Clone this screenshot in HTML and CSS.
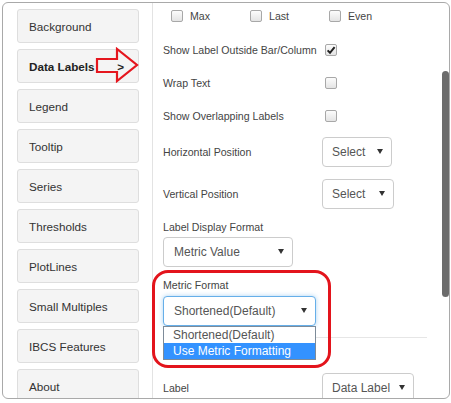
FILE: index.html
```html
<!DOCTYPE html>
<html>
<head>
<meta charset="utf-8">
<link rel="stylesheet" href="styles.css">
</head>
<body>
<div class="panel">
  <div class="nav">
    <div class="nav-list">
      <div class="nav-btn nav-prev"></div>
      <div class="nav-btn">Background</div>
      <div class="nav-btn active">
        <span>Data Labels</span><span class="chev">&gt;</span>
        <svg class="pointer" width="44" height="36" viewBox="0 0 44 36">
          <polygon points="2,12 22,12 22,2 42,18 22,34 22,25 2,25" fill="none" stroke="#e5161e" stroke-width="2.2" stroke-linejoin="miter"/>
        </svg>
      </div>
      <div class="nav-btn">Legend</div>
      <div class="nav-btn">Tooltip</div>
      <div class="nav-btn">Series</div>
      <div class="nav-btn">Thresholds</div>
      <div class="nav-btn">PlotLines</div>
      <div class="nav-btn">Small Multiples</div>
      <div class="nav-btn">IBCS Features</div>
      <div class="nav-btn">About</div>
    </div>
  </div>
  <div class="content">
    <div class="form">
      <div class="row-checks">
        <label class="check-item"><span class="cb"></span><span>Max</span></label>
        <label class="check-item"><span class="cb"></span><span>Last</span></label>
        <label class="check-item"><span class="cb"></span><span>Even</span></label>
      </div>
      <div class="row row-cb first-cb">
        <span class="lbl">Show Label Outside Bar/Column</span>
        <span class="cb cb-right checked"><svg width="10" height="10" viewBox="0 0 10 10"><path d="M1.6 5.4 L4 7.8 L8.6 2.2" fill="none" stroke="#222" stroke-width="2"/></svg></span>
      </div>
      <div class="row row-cb">
        <span class="lbl">Wrap Text</span>
        <span class="cb cb-right"></span>
      </div>
      <div class="row row-cb">
        <span class="lbl">Show Overlapping Labels</span>
        <span class="cb cb-right"></span>
      </div>
      <div class="row row-sel horiz">
        <span class="lbl">Horizontal Position</span>
        <div class="select w70"><span>Select</span><span class="caret"></span></div>
      </div>
      <div class="row row-sel vert">
        <span class="lbl">Vertical Position</span>
        <div class="select w72"><span>Select</span><span class="caret"></span></div>
      </div>
      <div class="field-label fmt-label">Label Display Format</div>
      <div class="select w130 stacked"><span>Metric Value</span><span class="caret"></span></div>
      <div class="field-label metric-label">Metric Format</div>
      <div class="select-wrap">
        <div class="select w153 focused stacked"><span>Shortened(Default)</span><span class="caret"></span></div>
        <div class="dropdown">
          <div class="opt">Shortened(Default)</div>
          <div class="opt selected">Use Metric Formatting</div>
        </div>
      </div>
      <div class="divider"></div>
      <div class="row row-sel label-row">
        <span class="lbl">Label</span>
        <div class="select w92"><span>Data Label</span><span class="caret"></span></div>
      </div>
    </div>
    <div class="scrolltrack"><div class="thumb"></div></div>
  </div>
  <div class="callout"></div>
</div>
</body>
</html>
```
FILE: styles.css
```css
html, body {
  margin: 0;
  padding: 0;
  background: #ffffff;
}
body {
  font-family: "Liberation Sans", Arial, sans-serif;
  color: #333;
}
.panel {
  position: relative;
  box-sizing: border-box;
  margin: 2px 0 0 2px;
  width: 448px;
  height: 397px;
  border: 1px solid #a9a9a9;
  border-radius: 6px;
  overflow: hidden;
  display: flex;
  background: #fff;
}
.nav {
  box-sizing: border-box;
  width: 150px;
  flex: none;
  border-right: 1px solid #e3e3e3;
  overflow: hidden;
}
.nav-list {
  display: flex;
  flex-direction: column;
  gap: 6px;
  padding-left: 14px;
}
.nav-btn {
  position: relative;
  box-sizing: border-box;
  width: 122px;
  height: 34px;
  flex: none;
  border: 1px solid #dedede;
  border-radius: 3px;
  background: #f4f4f4;
  padding: 0 14px 0 11px;
  display: flex;
  align-items: center;
  justify-content: space-between;
  font-size: 11.7px;
  color: #333;
}
.nav-prev {
  margin-top: -34px;
}
.nav-btn.active {
  font-weight: bold;
  color: #222;
}
.chev {
  font-weight: bold;
}
.pointer {
  position: absolute;
  left: 77px;
  top: -3px;
}
.content {
  flex: 1;
  display: flex;
  min-width: 0;
}
.form {
  flex: 1;
  padding-left: 10px;
  font-size: 10.6px;
  color: #444;
}
.row-checks {
  display: flex;
  height: 25px;
  align-items: center;
  padding-left: 8px;
}
.check-item {
  width: 79px;
  display: flex;
  align-items: center;
  gap: 7px;
}
.cb {
  box-sizing: border-box;
  width: 12px;
  height: 12px;
  flex: none;
  border: 1px solid #a8a8a8;
  border-radius: 2px;
  background: linear-gradient(#fcfcfc, #e4e4e4);
  display: flex;
  align-items: center;
  justify-content: center;
}
.row {
  display: flex;
  align-items: center;
}
.lbl {
  width: 159px;
  flex: none;
}
.row-cb {
  height: 33px;
}
.first-cb {
  margin-top: 5px;
}
.cb-right {
  margin-left: 3px;
}
.row-sel {
  height: 30px;
}
.horiz {
  margin-top: 5px;
}
.vert {
  margin-top: 12px;
}
.select {
  box-sizing: border-box;
  height: 30px;
  border: 1px solid #cccccc;
  border-radius: 4px;
  background: #fff;
  display: flex;
  align-items: center;
  justify-content: space-between;
  padding: 0 8px 0 9px;
  font-size: 12px;
  color: #555;
}
.select.stacked {
  padding-left: 10px;
}
.caret {
  width: 0;
  height: 0;
  border-left: 3px solid transparent;
  border-right: 3px solid transparent;
  border-top: 5px solid #333;
  margin-top: -1px;
}
.w70 { width: 70px; }
.w72 { width: 72px; }
.w92 { width: 92px; }
.w130 { width: 130px; margin-top: 2px; }
.w153 { width: 153px; }
.field-label {
  height: 16px;
  line-height: 16px;
}
.fmt-label {
  margin-top: 10px;
}
.metric-label {
  margin-top: 10px;
}
.select-wrap {
  position: relative;
  margin-top: 3px;
  width: 153px;
}
.select.focused {
  border-color: #66afe9;
  box-shadow: 0 0 5px rgba(102, 175, 233, 0.55);
}
.dropdown {
  position: absolute;
  left: 0;
  top: 100%;
  z-index: 3;
  box-sizing: border-box;
  width: 153px;
  border: 1px solid #7d8b99;
  background: #fff;
  font-size: 12px;
}
.opt {
  height: 16px;
  line-height: 16px;
  padding-left: 9px;
  color: #555;
}
.opt.selected {
  background: #3392ff;
  color: #fff;
}
.divider {
  margin-top: 11px;
  width: 264px;
  height: 1px;
  background: #e6e6e6;
}
.label-row {
  margin-top: 35px;
}
.scrolltrack {
  width: 7px;
  flex: none;
}
.thumb {
  margin-top: 68px;
  height: 226px;
  border-radius: 4px;
  background: #6c6c6c;
}
.callout {
  position: absolute;
  left: 149px;
  top: 267px;
  box-sizing: border-box;
  width: 179px;
  height: 98px;
  border: 3px solid #e3141c;
  border-radius: 16px;
  pointer-events: none;
  z-index: 4;
}
```
